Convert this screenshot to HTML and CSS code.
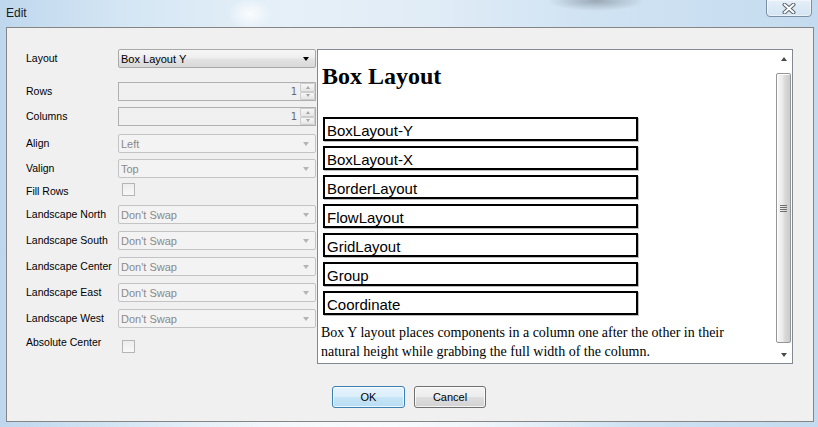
FILE: index.html
```html
<!DOCTYPE html>
<html lang="en">
<head>
<meta charset="utf-8">
<title>Edit</title>
<link rel="stylesheet" href="styles.css">
</head>
<body>
<div class="window">
  <div class="titlebar">
    <span class="title">Edit</span>
    <button class="close-btn" aria-label="Close">
      <svg width="14" height="11" viewBox="0 0 14 11">
        <path d="M2.5 1.5 L11.5 9.5 M11.5 1.5 L2.5 9.5" stroke="#5a6470" stroke-width="4" stroke-linecap="round" fill="none"/>
        <path d="M2.5 1.5 L11.5 9.5 M11.5 1.5 L2.5 9.5" stroke="#ffffff" stroke-width="2" stroke-linecap="round" fill="none"/>
      </svg>
    </button>
  </div>

  <div class="client">
    <div class="main">
      <div class="form">
        <span class="lbl">Layout</span>
        <div class="field combo"><span class="val">Box Layout Y</span><i class="arrow"></i></div>

        <span class="lbl">Rows</span>
        <div class="field spin"><span class="num">1</span><span class="spin-btns"><i class="sb up"></i><i class="sb down"></i></span></div>

        <span class="lbl">Columns</span>
        <div class="field spin"><span class="num">1</span><span class="spin-btns"><i class="sb up"></i><i class="sb down"></i></span></div>

        <span class="lbl">Align</span>
        <div class="field combo disabled"><span class="val">Left</span><i class="arrow"></i></div>

        <span class="lbl">Valign</span>
        <div class="field combo disabled"><span class="val">Top</span><i class="arrow"></i></div>

        <span class="lbl">Fill Rows</span>
        <span class="check"></span>

        <span class="lbl">Landscape North</span>
        <div class="field combo disabled"><span class="val">Don't Swap</span><i class="arrow"></i></div>

        <span class="lbl">Landscape South</span>
        <div class="field combo disabled"><span class="val">Don't Swap</span><i class="arrow"></i></div>

        <span class="lbl">Landscape Center</span>
        <div class="field combo disabled"><span class="val">Don't Swap</span><i class="arrow"></i></div>

        <span class="lbl">Landscape East</span>
        <div class="field combo disabled"><span class="val">Don't Swap</span><i class="arrow"></i></div>

        <span class="lbl">Landscape West</span>
        <div class="field combo disabled"><span class="val">Don't Swap</span><i class="arrow"></i></div>

        <span class="lbl lbl-last">Absolute Center</span>
        <span class="check check-last"></span>
      </div>

      <div class="preview">
        <div class="doc">
          <h2>Box Layout</h2>
          <div class="item">BoxLayout-Y</div>
          <div class="item">BoxLayout-X</div>
          <div class="item">BorderLayout</div>
          <div class="item">FlowLayout</div>
          <div class="item">GridLayout</div>
          <div class="item">Group</div>
          <div class="item">Coordinate</div>
          <p class="desc">Box Y layout places components in a column one after the other in their natural height while grabbing the full width of the column.</p>
        </div>
        <div class="vscroll">
          <div class="sb-btn"><i class="tri-up"></i></div>
          <div class="sb-track">
            <div class="sb-thumb"><span class="grip"></span></div>
          </div>
          <div class="sb-btn"><i class="tri-down"></i></div>
        </div>
      </div>
    </div>

    <div class="buttons">
      <button class="btn default">OK</button>
      <button class="btn cancel">Cancel</button>
    </div>
  </div>
</div>
</body>
</html>
```
FILE: styles.css
```css
* { box-sizing: border-box; }

html, body { margin: 0; padding: 0; }

body {
  width: 818px;
  height: 427px;
  overflow: hidden;
  font-family: "Liberation Sans", Arial, sans-serif;
  font-size: 11px;
  color: #000;
  background:
    radial-gradient(ellipse 22px 16px at 250px 14px, rgba(255,255,255,0.85), rgba(255,255,255,0)),
    radial-gradient(ellipse 48px 10px at 596px 1px, rgba(120,130,140,0.6), rgba(120,130,140,0)),
    radial-gradient(ellipse 260px 30px at 380px 430px, rgba(255,255,255,0.9), rgba(255,255,255,0)),
    linear-gradient(90deg, #bfd7ed 0%, #d4e6f4 15%, #e6f0f8 35%, #dfebf6 55%, #d0e3f3 72%, #c4dbef 100%);
}

/* ---- window chrome ---- */
.window {
  display: flex;
  flex-direction: column;
  height: 427px;
}

.titlebar {
  height: 27px;
  display: flex;
  justify-content: space-between;
  align-items: flex-start;
  padding: 0 6px 0 6px;
}

.title {
  font-family: "Liberation Sans", Arial, sans-serif;
  font-size: 12px;
  line-height: 26px;
  color: #1a1a1a;
}

.close-btn {
  width: 46px;
  height: 18px;
  margin-top: -1px;
  padding: 0;
  border: 1px solid #7c8ea3;
  border-radius: 0 0 4px 4px;
  background: linear-gradient(rgba(255,255,255,0.55), rgba(255,255,255,0.25));
  box-shadow: inset 0 0 0 1px rgba(255,255,255,0.5);
  display: flex;
  align-items: center;
  justify-content: center;
}

.close-btn svg { display: block; }

.client {
  margin-left: 6px;
  width: 808px;
  height: 395px;
  border: 1px solid #858585;
  background: #f0f0f0;
  display: flex;
  flex-direction: column;
}

.main {
  display: flex;
  align-items: flex-start;
  padding: 21px 0 0 19px;
}

/* ---- property form ---- */
.form {
  display: grid;
  grid-template-columns: 92px 198px;
  grid-template-rows: 33px 25px 27px 25px 23px 23px 26px 26px 26px 26px 24px 20px;
  align-items: start;
  margin-right: 1px;
}

.lbl {
  font-size: 10.5px;
  line-height: 19px;
  white-space: nowrap;
  color: #000;
}

.field {
  height: 19px;
  display: flex;
  align-items: center;
  border-radius: 2px;
  white-space: nowrap;
}

.combo {
  border: 1px solid #a8a8a8;
  background: linear-gradient(#f6f6f6 0%, #eeeeee 45%, #e3e3e3 55%, #d9d9d9 100%);
  padding-left: 2px;
}

.combo .val {
  flex: 1;
  font-size: 11px;
  color: #000;
}

.arrow {
  width: 0;
  height: 0;
  border-left: 3.5px solid transparent;
  border-right: 3.5px solid transparent;
  border-top: 4px solid #000;
  margin-right: 6px;
}

.combo.disabled {
  border-color: #c3c3c3;
  background: #f3f3f3;
}

.combo.disabled .val { color: #8a8a8a; }

.combo.disabled .arrow { border-top-color: #b4b4b4; }

.spin {
  border: 1px solid #b0b0b0;
  border-radius: 0;
  background: #f0f0f0;
  align-items: stretch;
}

.spin .num {
  flex: 1;
  text-align: right;
  padding-right: 3px;
  font-family: "DejaVu Sans", sans-serif;
  font-size: 10px;
  line-height: 17px;
  color: #6a6a6a;
}

.spin-btns {
  width: 15px;
  display: flex;
  flex-direction: column;
}

.sb {
  flex: 1;
  border: 1px solid #cdcdcd;
  border-radius: 1px;
  background: linear-gradient(#f6f6f6, #e6e6e6);
  display: flex;
  align-items: center;
  justify-content: center;
}

.sb::after {
  content: "";
  width: 0;
  height: 0;
  border-left: 2.5px solid transparent;
  border-right: 2.5px solid transparent;
}

.sb.up::after { border-bottom: 3px solid #a5a5a5; }
.sb.down::after { border-top: 3px solid #a5a5a5; }

.check {
  width: 13px;
  height: 13px;
  margin: 1px 0 0 4px;
  border: 1px solid #b5b5b5;
  background: linear-gradient(#ededed, #f8f8f8);
}

.check-last { margin-top: 7px; }

/* ---- layout preview ---- */
.preview {
  width: 476px;
  height: 315px;
  border: 1px solid #828790;
  background: #fff;
  display: flex;
}

.doc {
  flex: 1;
  padding-left: 4px;
  overflow: hidden;
  font-family: "Liberation Serif", "Times New Roman", serif;
}

.doc h2 {
  font-size: 24px;
  line-height: 27px;
  font-weight: bold;
  margin: 13px 0 27px 0;
}

.item {
  width: 315px;
  height: 24px;
  margin: 0 0 5px 1px;
  padding: 3px 0 0 2px;
  border: 2px solid #000;
  box-shadow: 1px 1px 0 #bdbdbd;
  font-family: "Liberation Sans", Arial, sans-serif;
  font-size: 15px;
  line-height: 17px;
}

.desc {
  width: 432px;
  margin: 8px 0 0 -1px;
  font-size: 14px;
  line-height: 19px;
}

.vscroll {
  width: 17px;
  display: flex;
  flex-direction: column;
  background: #fff;
}

.sb-btn {
  height: 17px;
  display: flex;
  align-items: center;
  justify-content: center;
}

.tri-up, .tri-down {
  width: 0;
  height: 0;
  border-left: 3.5px solid transparent;
  border-right: 3.5px solid transparent;
}

.tri-up { border-bottom: 4px solid #4a4a4a; }
.tri-down { border-top: 4px solid #4a4a4a; }

.sb-track {
  flex: 1;
  display: flex;
  padding: 6px 1px 3px 1px;
}

.sb-thumb {
  flex: 1;
  border: 1px solid #959595;
  border-radius: 2px;
  background: linear-gradient(90deg, #f6f6f6 0%, #ececec 40%, #dadada 60%, #cbcbcb 100%);
  box-shadow: inset 1px 1px 0 #ffffff;
  display: flex;
  align-items: center;
  justify-content: center;
}

.grip {
  width: 7px;
  height: 7px;
  background: repeating-linear-gradient(#6f6f6f 0 1px, transparent 1px 2px);
}

/* ---- dialog buttons ---- */
.buttons {
  display: flex;
  justify-content: center;
  gap: 9px;
  margin-top: 22px;
  padding-right: 2px;
}

.btn {
  height: 22px;
  padding: 0;
  border-radius: 3px;
  font-family: "Liberation Sans", Arial, sans-serif;
  font-size: 11px;
  color: #000;
  border: 1px solid #707070;
  box-shadow: inset 0 0 0 1px rgba(255,255,255,0.75);
}

.btn.default {
  width: 73px;
  border-color: #3c7fb1;
  background: linear-gradient(#e6f4fc 0%, #daeefb 50%, #c6e5f7 52%, #b8dcf2 100%);
}

.btn.cancel {
  width: 72px;
  background: linear-gradient(#f4f4f4 0%, #ececec 50%, #dedede 52%, #d2d2d2 100%);
}
```
